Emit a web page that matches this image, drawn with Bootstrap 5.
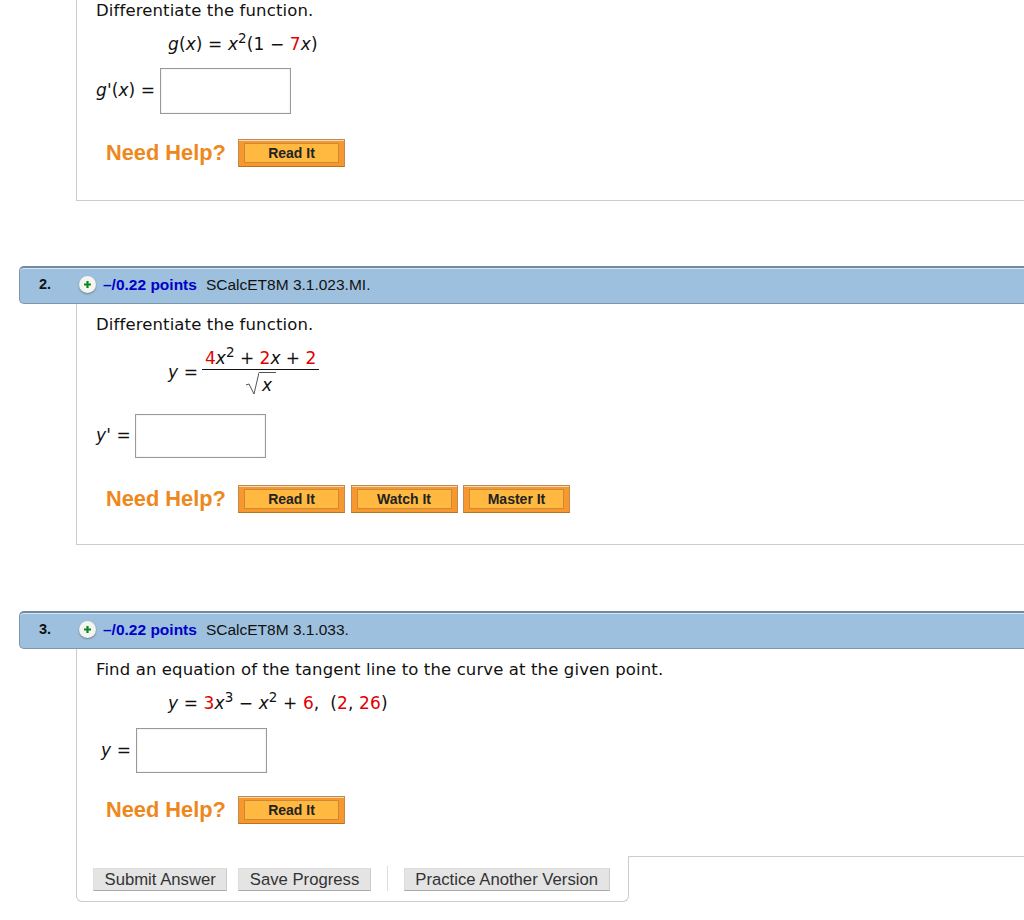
<!DOCTYPE html>
<html lang="en">

<head>
    <meta charset="UTF-8" />
    <meta name="viewport" content="width=device-width, initial-scale=1.0" />
    <title>Homework</title>
    <link href="https://cdn.jsdelivr.net/npm/bootstrap@5.3.0/dist/css/bootstrap.min.css" rel="stylesheet" />
    <style>
        body { background: #fff; color: #111; font-family: "DejaVu Sans", sans-serif; font-size: 16.5px; overflow: hidden; }
        .page-wrap { height: 920px; overflow: hidden; }
        .q-bar { height: 38px; margin-left: 19px; padding-bottom: 2px; background: #9dc0de; border: 1px solid #7f97ad; border-top: 2px solid #6f8aa3; border-right: 0; border-radius: 5px 0 0 5px; box-shadow: inset 0 1px 0 #d8e6f2; font-family: "Liberation Sans", sans-serif; font-size: 15.5px; }
        .q-num { width: 59px; padding-left: 19px; font-size: 14.5px; font-weight: 700; color: #111; }
        .q-plus { width: 17px; height: 17px; margin-right: 7px; background: #f4f4f0; border-radius: 50%; box-shadow: 0 1px 2px #6d7f8c; }
        .q-pts { color: #0000c8; font-weight: 700; margin-right: 9px; }
        .q-body { margin-left: 76px; border-left: 1px solid #ccc; padding-left: 19px; }
        .q-first { height: 201px; border-bottom: 1px solid #ccc; }
        .q-second { height: 241px; border-bottom: 1px solid #ccc; padding-top: 10px; }
        .q-third { height: 207px; padding-top: 10px; }
        .q-gap { height: 65px; }
        .q-gap-wide { height: 66px; }
        .q-text { height: 21px; line-height: 21px; letter-spacing: .12px; white-space: nowrap; }
        .q-math { font-size: 17px; line-height: 24px; padding-left: 72px; white-space: nowrap; letter-spacing: .1px; }
        .math-top1 { margin-top: 11px; }
        .math-top2 { margin-top: 13px; }
        .q-math i, .ans-label i { font-style: oblique; }
        .q-math sup { font-size: 13.5px; top: -.5em; line-height: 0; }
        .red-num { color: #e00000; }
        .frac-wrap { gap: 4px; }
        .frac-top { padding: 0 3px; border-bottom: 1px solid #111; height: 22px; line-height: 20px; letter-spacing: 0; }
        .frac-bot { height: 26px; }
        .sqrt-x { display: block; width: 17px; height: 22px; margin-top: 2px; border-top: 1px solid #555; line-height: 25px; }
        .ans-box { width: 131px; height: 46px; border: 1px solid #999; box-shadow: inset 0 0 2px #ddd; background: #fff; border-radius: 0; padding: 0; }
        .box-mid { height: 45px; }
        .box-low { height: 44px; }
        .ans-label { font-size: 17px; white-space: nowrap; letter-spacing: .1px; }
        .lbl-g { width: 64px; }
        .lbl-yp { width: 39px; }
        .lbl-y { width: 40px; padding-left: 5px; }
        .box-top1 { margin-top: 12px; }
        .box-top2 { margin-top: 18px; }
        .box-top3 { margin-top: 13px; }
        .help-row { padding-left: 10px; }
        .help-top1 { margin-top: 25px; }
        .help-top2 { margin-top: 27px; }
        .help-top3 { margin-top: 23px; }
        .help-text { width: 132px; font-family: "Liberation Sans", sans-serif; font-weight: 700; font-size: 21.8px; color: #ee881c; line-height: 28px; }
        .help-btn { width: 107px; height: 28px; padding: 3px 5px; margin-right: 5.5px; background: #f7972c; border: 1px solid #c08a55; border-bottom-color: #b97420; border-radius: 0; box-shadow: inset 0 1px 0 #f6d9b8; }
        .help-btn span { display: block; height: 20px; line-height: 18px; background: #ffb940; border: 1px solid #c98a3c; font-family: "Liberation Sans", sans-serif; font-size: 14px; font-weight: 700; color: #222; text-align: center; }
        .foot-row { height: 46px; }
        .foot-box { width: 553px; margin-left: 76px; height: 46px; border: 1px solid #ccc; border-top: 0; border-radius: 0 0 6px 6px; padding: 12px 0 0 16px; }
        .foot-rest { border-top: 1px solid #ccc; height: 1px; }
        .act-btn { height: 23px; padding: 0 10.5px; font-family: "Liberation Sans", sans-serif; font-size: 16.7px; line-height: 21px; color: #333; background: #e4e4e4; border: 1px solid #ddd; border-bottom-color: #aaa; border-right-color: #ccc; border-radius: 0; white-space: nowrap; }
        .act-save { margin-left: 3px; }
        .act-sep { width: 1px; height: 25px; margin: -2px 16px 0 16px; background: #ddd; }
    </style>
</head>

<body>
    <div class="page-wrap">

        <!-- question 1, top is cut off -->
        <div class="q-body q-first">
            <div class="q-text">Differentiate the function.</div>
            <div class="q-math math-top1"><i>g</i>(<i>x</i>) = <i>x</i><sup>2</sup>(1 &minus; <span class="red-num">7</span><i>x</i>)</div>
            <div class="d-flex align-items-center box-top1">
                <div class="ans-label lbl-g"><i>g</i>'(<i>x</i>) =</div>
                <input type="text" class="ans-box" aria-label="answer">
            </div>
            <div class="help-row d-flex align-items-center help-top1">
                <div class="help-text">Need Help?</div>
                <button class="btn help-btn"><span>Read It</span></button>
            </div>
        </div>
        <div class="q-gap"></div>

        <!-- question 2 -->
        <div class="q-bar d-flex align-items-center">
            <div class="q-num">2.</div>
            <div class="q-plus d-flex align-items-center justify-content-center">
                <svg width="9" height="9" viewBox="0 0 9 9"><path d="M4.5 1v7M1 4.5h7" stroke="#0a8a1e" stroke-width="2.2" /></svg>
            </div>
            <span class="q-pts">&ndash;/0.22 points</span>
            <span>SCalcET8M 3.1.023.MI.</span>
        </div>
        <div class="q-body q-second">
            <div class="q-text">Differentiate the function.</div>
            <div class="q-math d-flex align-items-center frac-wrap math-top2">
                <div><i>y</i> =</div>
                <div class="text-center">
                    <div class="frac-top"><span class="red-num">4</span><i>x</i><sup>2</sup> + <span class="red-num">2</span><i>x</i> + <span class="red-num">2</span></div>
                    <div class="frac-bot d-flex justify-content-center">
                        <svg width="13" height="26" viewBox="0 0 13 26"><path d="M0 15l3-1 5 10 5-21.500" fill="none" stroke="#555" stroke-width="1" /></svg>
                        <i class="sqrt-x">x</i>
                    </div>
                </div>
            </div>
            <div class="d-flex align-items-center box-top2">
                <div class="ans-label lbl-yp"><i>y</i>' =</div>
                <input type="text" class="ans-box box-low" aria-label="answer">
            </div>
            <div class="help-row d-flex align-items-center help-top2">
                <div class="help-text">Need Help?</div>
                <button class="btn help-btn"><span>Read It</span></button>
                <button class="btn help-btn"><span>Watch It</span></button>
                <button class="btn help-btn"><span>Master It</span></button>
            </div>
        </div>
        <div class="q-gap-wide"></div>

        <!-- question 3 -->
        <div class="q-bar d-flex align-items-center">
            <div class="q-num">3.</div>
            <div class="q-plus d-flex align-items-center justify-content-center">
                <svg width="9" height="9" viewBox="0 0 9 9"><path d="M4.5 1v7M1 4.5h7" stroke="#0a8a1e" stroke-width="2.2" /></svg>
            </div>
            <span class="q-pts">&ndash;/0.22 points</span>
            <span>SCalcET8M 3.1.033.</span>
        </div>
        <div class="q-body q-third">
            <div class="q-text">Find an equation of the tangent line to the curve at the given point.</div>
            <div class="q-math math-top1"><i>y</i> = <span class="red-num">3</span><i>x</i><sup>3</sup> &minus; <i>x</i><sup>2</sup> + <span class="red-num">6</span>, &nbsp;(<span class="red-num">2</span>, <span class="red-num">26</span>)</div>
            <div class="d-flex align-items-center box-top3">
                <div class="ans-label lbl-y"><i>y</i> =</div>
                <input type="text" class="ans-box box-mid" aria-label="answer">
            </div>
            <div class="help-row d-flex align-items-center help-top3">
                <div class="help-text">Need Help?</div>
                <button class="btn help-btn"><span>Read It</span></button>
            </div>
        </div>
        <div class="foot-row d-flex">
            <div class="foot-box d-flex align-items-start">
                <button class="act-btn me-2">Submit Answer</button>
                <button class="act-btn act-save">Save Progress</button>
                <div class="act-sep"></div>
                <button class="act-btn">Practice Another Version</button>
            </div>
            <div class="foot-rest flex-grow-1"></div>
        </div>
    </div>

    <script src="https://cdn.jsdelivr.net/npm/bootstrap@5.3.0/dist/js/bootstrap.bundle.min.js"></script>
</body>

</html>
